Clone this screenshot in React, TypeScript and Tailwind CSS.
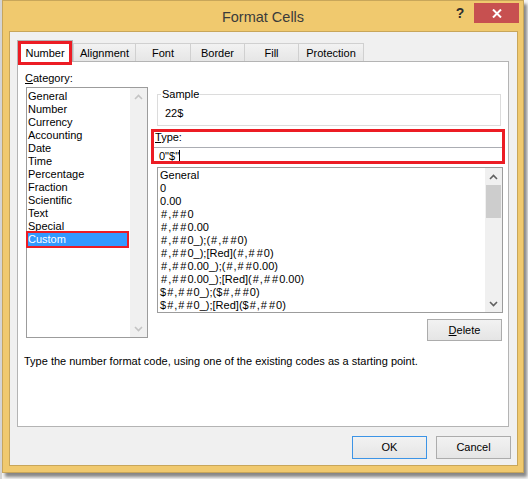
import React from "react";

function Chevron({ dir, color }: { dir: "up" | "down"; color: string }) {
  return (
    <svg width="9" height="6" viewBox="0 0 9 6" className="block">
      <polyline
        points={dir === "up" ? "1,5 4.5,1.5 8,5" : "1,1 4.5,4.5 8,1"}
        fill="none"
        stroke={color}
        strokeWidth="1.6"
      />
    </svg>
  );
}

const categories = [
  "General",
  "Number",
  "Currency",
  "Accounting",
  "Date",
  "Time",
  "Percentage",
  "Fraction",
  "Scientific",
  "Text",
  "Special",
  "Custom",
];

const types = [
  "General",
  "0",
  "0.00",
  "#,##0",
  "#,##0.00",
  "#,##0_);(#,##0)",
  "#,##0_);[Red](#,##0)",
  "#,##0.00_);(#,##0.00)",
  "#,##0.00_);[Red](#,##0.00)",
  "$#,##0_);($#,##0)",
  "$#,##0_);[Red]($#,##0)",
];

const tabs = [
  { label: "Alignment", cls: "w-[63px]" },
  { label: "Font", cls: "w-[56px] -ml-px" },
  { label: "Border", cls: "w-[55px] -ml-px" },
  { label: "Fill", cls: "w-[55px] -ml-px" },
  { label: "Protection", cls: "w-[66px] -ml-px" },
];

function Code({ text }: { text: string }) {
  return (
    <>
      {text.split("").map((ch, i) =>
        ch === "#" ? (
          <span key={i} className="mx-[1px]">
            #
          </span>
        ) : (
          <span key={i}>{ch}</span>
        )
      )}
    </>
  );
}

export default function App() {
  return (
    <div className="w-[528px] h-[479px] overflow-hidden bg-[#f6f6f6] border-l-2 border-[#d4d4d4] font-['Liberation_Sans',Arial,sans-serif] text-[11px] leading-[15px] text-black">
      <div className="w-[522px] h-[473px] flex flex-col bg-[#f0c96e] border border-[#c8a65a] shadow-[3px_4px_3px_rgba(0,0,0,0.45)]">
        {/* Title bar */}
        <div className="h-[30px] shrink-0 flex items-start">
          <div className="w-[70px]" />
          <div className="flex-1 text-center text-[14.5px] leading-[18px] pt-[7px] text-[#3b3b3b]">
            Format Cells
          </div>
          <div className="w-[70px] flex items-start">
            <div className="w-[14px] h-[20px] mt-[2px] flex items-center justify-center text-[14px] font-bold text-[#2e2e2e]">
              ?
            </div>
            <div className="ml-[7px] mt-[2px] w-[45px] h-[20px] bg-[#c75050] flex items-center justify-center">
              <svg width="10" height="9" viewBox="0 0 10 9">
                <path d="M1 0.5 L9 8.5 M9 0.5 L1 8.5" stroke="#ffffff" strokeWidth="2" />
              </svg>
            </div>
          </div>
        </div>

        {/* Client area */}
        <div className="ml-[6px] mr-[5px] mb-[6px] flex-1 border border-[#c8a65a] bg-[#f0f0f0] flex flex-col pl-[7px] pt-[8px]">
          {/* Tabs */}
          <div className="h-[21px] flex items-end">
            <div className="relative z-10 -mb-px w-[56px] h-[22px] bg-white border-l border-t border-r border-[#b4b4b4] flex justify-center pt-[5px]">
              Number
              <div className="absolute left-0 right-0 top-0 -bottom-[3px] border-[3px] border-[#ec1c24] pointer-events-none" />
            </div>
            {tabs.map((t) => (
              <div
                key={t.label}
                className={`${t.cls} h-[18px] border-l border-t border-r border-[#d0d0d0] bg-linear-to-b from-[#f2f2f2] to-[#e6e6e6] flex justify-center pt-[2px]`}
              >
                {t.label}
              </div>
            ))}
          </div>

          {/* Panel */}
          <div className="w-[492px] h-[366px] border border-[#b4b4b4] bg-white flex flex-col">
            <div className="flex">
              {/* Left column */}
              <div className="ml-[8px] pt-[9px] flex flex-col">
                <div className="-ml-[1px] h-[16px]">
                  <span className="underline underline-offset-1">C</span>ategory:
                </div>
                <div className="w-[122px] h-[251px] border border-[#9c9c9c] flex">
                  <div className="flex-1 pt-[2px] pr-[3px] leading-[13px]">
                    {categories.map((c) =>
                      c === "Custom" ? (
                        <div key={c} className="relative h-[13px] bg-[#3399ff] text-white pl-[1px]">
                          {c}
                          <div className="absolute -left-[1px] -right-[2px] -top-[2px] -bottom-[2px] border-2 border-[#ec1c24]" />
                        </div>
                      ) : (
                        <div key={c} className="h-[13px] pl-[1px]">
                          {c}
                        </div>
                      )
                    )}
                  </div>
                  <div className="w-[17px] bg-[#f0f0f0] flex flex-col justify-between">
                    <div className="h-[17px] flex items-center justify-center">
                      <Chevron dir="up" color="#c4c4c4" />
                    </div>
                    <div className="h-[17px] flex items-center justify-center">
                      <Chevron dir="down" color="#c4c4c4" />
                    </div>
                  </div>
                </div>
              </div>

              {/* Right column */}
              <div className="ml-[3px] w-[354px] pt-[32px] flex flex-col">
                <div className="ml-[6px] w-[344px] h-[32px] border border-[#dcdcdc] relative pl-[7px] pt-[11px]">
                  <span className="absolute -top-[8px] left-[3px] bg-white px-[1px]">Sample</span>
                  22$
                </div>

                <div className="mt-[3px] w-[354px] h-[35px] relative pl-[4px] pt-[1px] flex flex-col">
                  <div className="h-[15px]">
                    <span className="underline underline-offset-1">T</span>ype:
                  </div>
                  <div className="mt-[2px] -ml-[2px] w-[350px] h-[16px] border-l border-t border-r border-[#abadb3] pl-[5px] pt-[1px] flex items-start">
                    <span>0"$"</span>
                    <span className="inline-block w-px h-[13px] bg-black mt-[1px]" />
                  </div>
                  <div className="absolute inset-0 border-[3px] border-[#ec1c24] pointer-events-none" />
                </div>

                <div className="mt-[3px] ml-[6px] w-[346px] h-[146px] border border-[#9c9c9c] flex">
                  <div className="flex-1 pl-[2px] pt-[1px] leading-[13px]">
                    {types.map((t) => (
                      <div key={t} className="h-[13px] whitespace-nowrap">
                        <Code text={t} />
                      </div>
                    ))}
                  </div>
                  <div className="w-[17px] bg-[#f0f0f0] flex flex-col">
                    <div className="h-[17px] flex items-center justify-center">
                      <Chevron dir="up" color="#606060" />
                    </div>
                    <div className="mx-[1px] h-[33px] bg-[#cdcdcd]" />
                    <div className="flex-1" />
                    <div className="h-[17px] flex items-center justify-center">
                      <Chevron dir="down" color="#606060" />
                    </div>
                  </div>
                </div>

                <div className="mt-[6px] ml-[276px] w-[75px] h-[22px] border border-[#acacac] bg-linear-to-b from-[#f2f2f2] to-[#e5e5e5] flex items-center justify-center">
                  <span>
                    <span className="underline underline-offset-1">D</span>elete
                  </span>
                </div>
              </div>
            </div>

            <div className="pl-[6px] mt-[13px]">
              Type the number format code, using one of the existing codes as a starting point.
            </div>
          </div>

          {/* Buttons */}
          <div className="mt-[9px] flex justify-end gap-[9px] pr-[6px]">
            <div className="w-[75px] h-[23px] border border-[#3c94e6] bg-linear-to-b from-[#f2f2f2] to-[#e5e5e5] flex items-center justify-center">
              OK
            </div>
            <div className="w-[75px] h-[23px] border border-[#acacac] bg-linear-to-b from-[#f2f2f2] to-[#e5e5e5] flex items-center justify-center">
              Cancel
            </div>
          </div>
        </div>
      </div>
    </div>
  );
}
